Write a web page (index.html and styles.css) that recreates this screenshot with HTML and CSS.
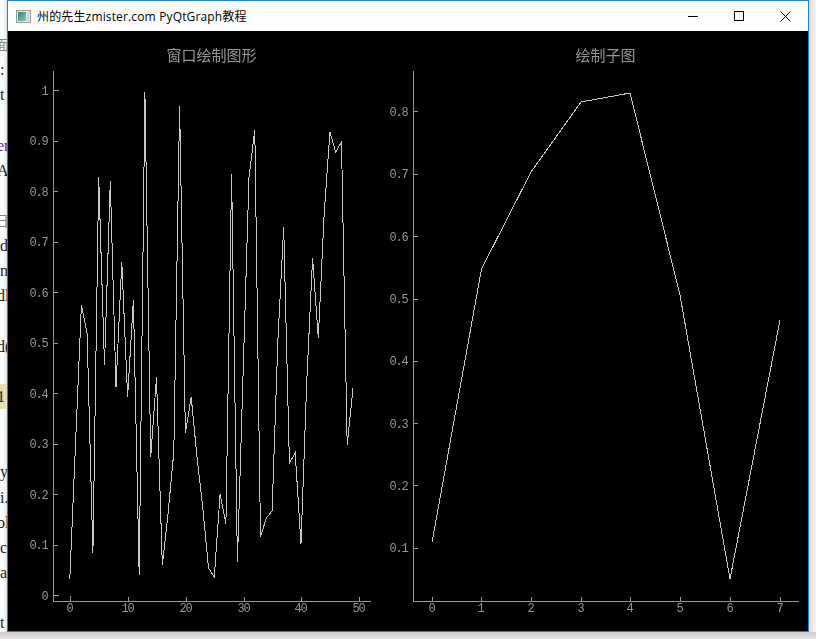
FILE: index.html
```html
<!DOCTYPE html>
<html lang="zh-CN">
<head>
    <meta charset="UTF-8">
    <meta name="viewport" content="width=device-width, initial-scale=1.0">
    <title>州的先生zmister.com PyQtGraph教程</title>
    <link rel="stylesheet" href="styles.css">
</head>
<body>
    <div class="desktop">
        <!-- editor behind the window, only its last column is visible -->
        <div class="editor">
            <div class="line cjk">面</div>
            <div class="line">:</div>
            <div class="line">t</div>
            <div class="line"></div>
            <div class="line link cut">er</div>
            <div class="line cut">Aj</div>
            <div class="line"></div>
            <div class="line cjk">日</div>
            <div class="line">d</div>
            <div class="line">n</div>
            <div class="line cut">dl</div>
            <div class="line"></div>
            <div class="line cut">d(</div>
            <div class="line"></div>
            <div class="line current cut">1</div>
            <div class="line"></div>
            <div class="line"></div>
            <div class="line">y</div>
            <div class="line">i.</div>
            <div class="line cut">ol</div>
            <div class="line">c:</div>
            <div class="line">a</div>
            <div class="line"></div>
            <div class="line">t</div>
        </div>

        <div class="window">
            <div class="titlebar">
                <svg class="app-icon" width="15" height="13" viewBox="0 0 15 13">
                    <defs>
                        <linearGradient id="iconFill" x1="0" y1="0" x2="1" y2="1">
                            <stop offset="0" stop-color="#2f7f9f"/>
                            <stop offset="1" stop-color="#8fc8a0"/>
                        </linearGradient>
                    </defs>
                    <rect x="0.5" y="0.5" width="14" height="12" fill="#e8e8e8" stroke="#9a9a9a"/>
                    <rect x="2" y="2" width="8" height="9" fill="url(#iconFill)"/>
                    <rect x="11" y="2" width="2" height="9" fill="#c4d4dc"/>
                </svg>
                <span class="title">州的先生zmister.com PyQtGraph教程</span>
                <div class="controls">
                    <div class="control">
                        <svg width="10" height="10" viewBox="0 0 10 10"><path d="M0 5.5H10" class="glyph"/></svg>
                    </div>
                    <div class="control">
                        <svg width="10" height="10" viewBox="0 0 10 10"><rect x="0.5" y="0.5" width="9" height="9" class="glyph"/></svg>
                    </div>
                    <div class="control">
                        <svg width="11" height="11" viewBox="0 0 11 11"><path d="M0.5 0.5L10.5 10.5M10.5 0.5L0.5 10.5" class="glyph"/></svg>
                    </div>
                </div>
            </div>

            <div class="plots">
                <svg class="plot plot-left" viewBox="8 31 372 600">
                    <text class="plot-title" x="211.5" y="61">窗口绘制图形</text>
                    <path class="axis" d="M53.5 71V601.5H371"/>
                    <path class="axis" d="M54 90.5H59M54 141.5H58M54 191.5H58M54 242.5H58M54 292.5H58M54 343.5H58M54 393.5H58M54 444.5H58M54 494.5H58M54 545.5H58M54 595.5H59"/>
                    <path class="axis" d="M70.5 601V596M128.5 601V597M186.5 601V597M244.5 601V597M301.5 601V597M359.5 601V597"/>
                    <text class="tick y-tick" x="47.5" y="95">1</text>
                    <text class="tick y-tick" x="47.5" y="145">0.9</text>
                    <text class="tick y-tick" x="47.5" y="196">0.8</text>
                    <text class="tick y-tick" x="47.5" y="246">0.7</text>
                    <text class="tick y-tick" x="47.5" y="297">0.6</text>
                    <text class="tick y-tick" x="47.5" y="347">0.5</text>
                    <text class="tick y-tick" x="47.5" y="398">0.4</text>
                    <text class="tick y-tick" x="47.5" y="448">0.3</text>
                    <text class="tick y-tick" x="47.5" y="499">0.2</text>
                    <text class="tick y-tick" x="47.5" y="549">0.1</text>
                    <text class="tick y-tick" x="47.5" y="600">0</text>
                    <text class="tick x-tick" x="69.5" y="612">0</text>
                    <text class="tick x-tick" x="127.5" y="612">10</text>
                    <text class="tick x-tick" x="185.5" y="612">20</text>
                    <text class="tick x-tick" x="243.5" y="612">30</text>
                    <text class="tick x-tick" x="300.5" y="612">40</text>
                    <text class="tick x-tick" x="358.5" y="612">50</text>
                    <polyline class="curve" points="69.8,579 75.6,442 81.4,305 87.1,333 92.9,553 98.7,177 104.5,365 110.3,181 116,387 121.8,262 127.6,397 133.4,300 139.2,575 144.9,92 150.7,457 156.5,377 162.3,565 168.1,513 173.8,452 179.6,106 185.4,433 191.2,397 197,457 202.7,507 208.5,568 214.3,577 220.1,494 225.9,524 231.6,174 237.4,562 243.2,370 249,177 254.8,130 260.5,537 266.3,518 272.1,511 277.9,340 283.7,227 289.4,463 295.2,453 301,544 306.8,380 312.6,258 318.3,338 324.1,215 329.9,132 335.7,152 341.5,142 347.2,445 353,388"/>
                </svg>

                <svg class="plot plot-right" viewBox="380 31 427 600">
                    <text class="plot-title" x="605.5" y="61">绘制子图</text>
                    <path class="axis" d="M413.5 71V601.5H799"/>
                    <path class="axis" d="M414 111.5H418M414 174.5H418M414 236.5H418M414 299.5H418M414 361.5H418M414 423.5H418M414 485.5H418M414 548.5H418"/>
                    <path class="axis" d="M432.5 601V597M481.5 601V597M531.5 601V597M581.5 601V597M630.5 601V597M680.5 601V597M730.5 601V597M780.5 601V597"/>
                    <text class="tick y-tick" x="407.5" y="116">0.8</text>
                    <text class="tick y-tick" x="407.5" y="178">0.7</text>
                    <text class="tick y-tick" x="407.5" y="241">0.6</text>
                    <text class="tick y-tick" x="407.5" y="303">0.5</text>
                    <text class="tick y-tick" x="407.5" y="365">0.4</text>
                    <text class="tick y-tick" x="407.5" y="428">0.3</text>
                    <text class="tick y-tick" x="407.5" y="490">0.2</text>
                    <text class="tick y-tick" x="407.5" y="552">0.1</text>
                    <text class="tick x-tick" x="431.5" y="612">0</text>
                    <text class="tick x-tick" x="480.5" y="612">1</text>
                    <text class="tick x-tick" x="530.5" y="612">2</text>
                    <text class="tick x-tick" x="580.5" y="612">3</text>
                    <text class="tick x-tick" x="629.5" y="612">4</text>
                    <text class="tick x-tick" x="679.5" y="612">5</text>
                    <text class="tick x-tick" x="729.5" y="612">6</text>
                    <text class="tick x-tick" x="779.5" y="612">7</text>
                    <polyline class="curve" points="432,542.5 481.5,269 531,172 581,102 630,93 680,295 730,579 780,320"/>
                </svg>
            </div>
        </div>

        <div class="shadow-right"></div>
        <div class="shadow-bottom"></div>
    </div>
</body>
</html>
```

FILE: styles.css
```css
html, body {
    margin: 0;
    padding: 0;
    background-color: #f4f4f4;
    overflow: hidden;
}
.desktop {
    display: grid;
    grid-template-columns: 7px 802px 7px;
    grid-template-rows: 632px 7px;
    width: 816px;
    height: 639px;
}

/* editor strip */
.editor {
    padding-top: 32px;
    overflow: hidden;
    font-family: "Liberation Serif", serif;
    font-size: 16px;
    color: #222;
    background: linear-gradient(90deg, #fff, #fff 3px, #e2e2e2);
}
.line {
    height: 25.15px;
    line-height: 25.15px;
    white-space: nowrap;
}
.line.cjk {
    font-family: "Noto Sans CJK SC", sans-serif;
    font-size: 14px;
    color: #888;
    text-indent: -5px;
}
.line.link {
    color: #5a1aa8;
}
.line.cut {
    text-indent: -3px;
}
.line.current {
    background-color: #e8deb4;
}

/* window */
.window {
    display: flex;
    flex-direction: column;
    border: 1px solid #1883d7;
    box-sizing: border-box;
    background-color: #000;
}
.titlebar {
    display: flex;
    align-items: center;
    flex: none;
    height: 30px;
    background-color: #fff;
}
.app-icon {
    margin-left: 8px;
    margin-right: 6px;
}
.title {
    font-family: "Open Sans", "Noto Sans CJK SC", sans-serif;
    font-size: 12px;
    letter-spacing: 0.15px;
    color: #000;
    white-space: nowrap;
}
.controls {
    display: flex;
    margin-left: auto;
}
.control {
    display: flex;
    align-items: center;
    justify-content: center;
    width: 46px;
    height: 30px;
}
.glyph {
    fill: none;
    stroke: #000;
    stroke-width: 1;
}

/* plots */
.plots {
    display: flex;
    flex: 1;
}
.plot {
    display: block;
    height: 600px;
    will-change: transform;
}
.plot-left {
    width: 372px;
}
.plot-right {
    width: 427px;
}
.plot-title {
    font-family: "Noto Sans CJK SC", sans-serif;
    font-size: 15px;
    fill: #969696;
    text-anchor: middle;
}
.axis {
    fill: none;
    stroke: #969696;
    stroke-width: 1;
    shape-rendering: crispEdges;
}
.tick {
    font-family: "Liberation Mono", monospace;
    font-size: 12px;
    letter-spacing: -1.2px;
    fill: #969696;
}
.y-tick {
    text-anchor: end;
}
.x-tick {
    text-anchor: middle;
}
.curve {
    fill: none;
    stroke: #c8c8c8;
    stroke-width: 1;
    shape-rendering: crispEdges;
}

/* window shadow */
.shadow-right {
    background: linear-gradient(90deg, #dedede, #f6f6f6);
}
.shadow-bottom {
    grid-column: 1 / 4;
    background: linear-gradient(180deg, #c9c9c9, #e6e6e6);
}
```
